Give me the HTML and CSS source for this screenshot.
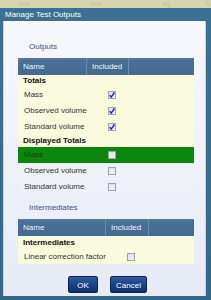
FILE: index.html
```html
<!DOCTYPE html>
<html>
<head>
<meta charset="utf-8">
<link rel="stylesheet" href="styles.css">
</head>
<body>
<div class="backdrop"><span class="bd1">N/A</span><span class="bd2">N/A</span><span class="bd3">kg</span><span>N</span></div>
<div class="window">
  <div class="titlebar">Manage Test Outputs</div>
  <div class="client">
    <div class="section-label">Outputs</div>
    <div class="table t1">
      <div class="hrow"><div class="hc">Name</div><div class="hc">Included</div><div class="hc last"></div></div>
      <div class="group yellow">Totals</div>
      <div class="row yellow"><div class="nc">Mass</div><div class="cc"><span class="cb"><svg viewBox="0 0 8 8"><path d="M1.6 4.3 L3.3 6.1 L6.4 1.4"/></svg></span></div><div></div></div>
      <div class="row yellow"><div class="nc">Observed volume</div><div class="cc"><span class="cb"><svg viewBox="0 0 8 8"><path d="M1.6 4.3 L3.3 6.1 L6.4 1.4"/></svg></span></div><div></div></div>
      <div class="row yellow"><div class="nc">Standard volume</div><div class="cc"><span class="cb"><svg viewBox="0 0 8 8"><path d="M1.6 4.3 L3.3 6.1 L6.4 1.4"/></svg></span></div><div></div></div>
      <div class="group yellow">Displayed Totals</div>
      <div class="row green"><div class="nc">Mass</div><div class="cc"><span class="cb"></span></div><div></div></div>
      <div class="row grey"><div class="nc">Observed volume</div><div class="cc"><span class="cb"></span></div><div></div></div>
      <div class="row grey"><div class="nc">Standard volume</div><div class="cc"><span class="cb"></span></div><div></div></div>
    </div>
    <div class="section-label second">Intermediates</div>
    <div class="table t2">
      <div class="hrow"><div class="hc">Name</div><div class="hc">Included</div><div class="hc last"></div></div>
      <div class="group yellow g2">Intermediates</div>
      <div class="row yellow r2"><div class="nc">Linear correction factor</div><div class="cc"><span class="cb"></span></div><div></div></div>
    </div>
    <div class="buttons">
      <div class="btn ok">OK</div>
      <div class="btn cancel">Cancel</div>
    </div>
  </div>
</div>
</body>
</html>
```

FILE: styles.css
```css
html, body {
  margin: 0;
  padding: 0;
}
body {
  width: 211px;
  height: 300px;
  overflow: hidden;
  background: #d6d5ae;
  font-family: "Liberation Sans", Arial, sans-serif;
  font-size: 8px;
  color: #333;
}
.backdrop {
  height: 8px;
  line-height: 8px;
  font-size: 7px;
  color: rgba(30, 50, 70, 0.16);
  display: flex;
  white-space: nowrap;
}
.bd1 { margin-left: 18px; width: 72px; }
.bd2 { width: 73px; }
.bd3 { width: 42px; }
.window {
  background: linear-gradient(#3d7193, #356887);
  padding: 0 5px 4px 3px;
}
.titlebar {
  height: 13px;
  line-height: 13px;
  padding-left: 2px;
  color: #ffffff;
  font-size: 8px;
  white-space: nowrap;
}
.client {
  background: linear-gradient(#f6f8fd, #e6ebf6);
  box-shadow: inset 1px 0 0 #c9d5e4, inset -1px 0 0 #c9d5e4;
  padding: 20px 12px 3px 15px;
  height: 275px;
  box-sizing: border-box;
}
.section-label {
  height: 11px;
  line-height: 11px;
  padding-left: 11px;
  color: #3c4e98;
  margin-bottom: 6px;
}
.section-label.second {
  margin-top: 7px;
}
.table {
  display: grid;
}
.t1 { grid-template-columns: 69px 42px 1fr; }
.t2 { grid-template-columns: 88px 43px 1fr; }
.hrow {
  display: contents;
}
.hc {
  height: 17px;
  line-height: 17px;
  box-sizing: border-box;
  padding-left: 5px;
  color: #f4f6fa;
  background: linear-gradient(#5a7fa3 0, #4a7096 2px, #436a90 100%);
  border-right: 1px solid #6d8db0;
  white-space: nowrap;
}
.hc.last {
  border-right: 0;
}
.group {
  grid-column: 1 / -1;
  height: 12px;
  line-height: 12px;
  padding-left: 5px;
  font-weight: bold;
  color: #111;
  white-space: nowrap;
}
.group.g2 {
  height: 13px;
  line-height: 13px;
}
.row {
  display: contents;
}
.row > div {
  height: 16px;
  line-height: 16px;
}
.row.r2 > div {
  height: 15px;
  line-height: 15px;
}
.yellow, .row.yellow > div {
  background: #fafadf;
}
.row.green > div {
  background: #0b880b;
  color: #1c3a1c;
}
.row.grey > div {
  background: #eef1f7;
}
.nc {
  padding-left: 6px;
  white-space: nowrap;
}
.cc {
  padding-left: 21px;
  display: flex;
  align-items: center;
}
.cb {
  display: block;
  width: 8px;
  height: 8px;
  box-sizing: border-box;
  border: 1px solid #9aa2b4;
  background: linear-gradient(#dfe3ec, #eef0f5);
  position: relative;
}
.cb svg {
  position: absolute;
  left: -1px;
  top: -1px;
  width: 8px;
  height: 8px;
}
.cb path {
  fill: none;
  stroke: #1b2aa0;
  stroke-width: 1.4;
}
.buttons {
  display: flex;
  justify-content: center;
  gap: 12px;
  margin-top: 12px;
  padding-left: 3px;
}
.btn {
  height: 17px;
  line-height: 17px;
  box-sizing: border-box;
  text-align: center;
  color: #fff;
  border: 1px solid #0b2358;
  border-radius: 2px;
  background: linear-gradient(#2e5a9c 0, #1c4688 45%, #0f3170 100%);
}
.ok { width: 30px; }
.cancel { width: 37px; }
```
